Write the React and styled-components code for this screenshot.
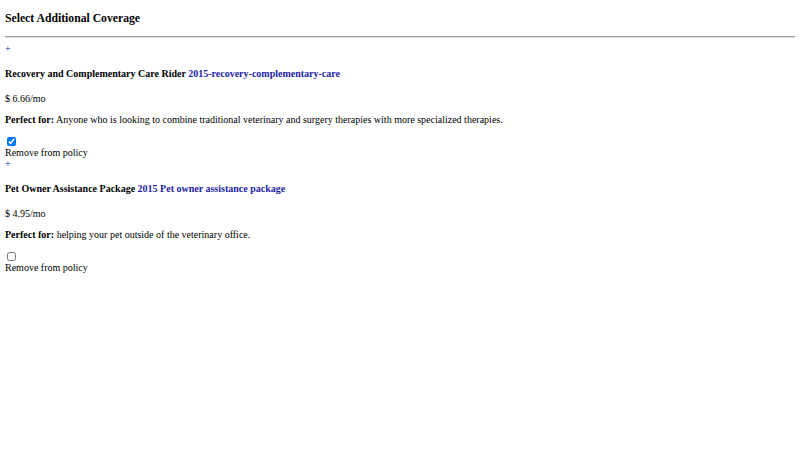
import styled, { createGlobalStyle } from 'styled-components'

const Global = createGlobalStyle`
    body {
        margin: 0;
        background: #fff;
        color: #000;
        font-family: 'Liberation Serif', 'Times New Roman', serif;
        font-size: 10px;
    }
`
const Page = styled.div`
    padding: 12px 5px;
`
const Titulo = styled.h3`
    font-size: 11.7px;
    line-height: 14px;
    font-weight: bold;
    margin: 0;
`
const Rule = styled.hr`
    height: 0;
    margin: 10px 0 5px 0;
    border: 0;
    border-top: 1px solid #9a9a9a;
    border-bottom: 1px solid #e6e6e6;
`
const Plus = styled.a`
    display: block;
    color: #1d1da8;
    line-height: 12px;
    text-decoration: none;
`
const Nome = styled.div`
    font-weight: bold;
    line-height: 12px;
    margin-top: 13px;
    a{
        color: #1d1da8;
        text-decoration: none;
    }
`
const Texto = styled.p`
    margin: ${p => p.gap}px 0 0 0;
    line-height: 12px;
`
const Check = styled.div`
    height: 12px;
    margin-top: 9px;
    display: flex;
    align-items: center;
    input{
        width: 9px;
        height: 9px;
        margin: 0 0 0 2px;
    }
`
const Remover = styled.div`
    line-height: 12px;
    margin-bottom: -1px;
`

const planos = [
    {
        nome: 'Recovery and Complementary Care Rider',
        codigo: '2015-recovery-complementary-care',
        preco: '$ 6.66/mo',
        para: 'Anyone who is looking to combine traditional veterinary and surgery therapies with more specialized therapies.',
        marcado: true,
    },
    {
        nome: 'Pet Owner Assistance Package',
        codigo: '2015 Pet owner assistance package',
        preco: '$ 4.95/mo',
        para: 'helping your pet outside of the veterinary office.',
        marcado: false,
    },
]

function App(){
    return(
        <Page>
            <Global />
            <Titulo>Select Additional Coverage</Titulo>
            <Rule />
            {planos.map(plano => (
                <div key={plano.codigo}>
                    <Plus href="#">+</Plus>
                    <Nome>{plano.nome} <a href="#">{plano.codigo}</a></Nome>
                    <Texto gap={13}>{plano.preco}</Texto>
                    <Texto gap={9}><b>Perfect for:</b> {plano.para}</Texto>
                    <Check>
                        <input type="checkbox" defaultChecked={plano.marcado} />
                    </Check>
                    <Remover>Remove from policy</Remover>
                </div>
            ))}
        </Page>
    )
}

export default App;
